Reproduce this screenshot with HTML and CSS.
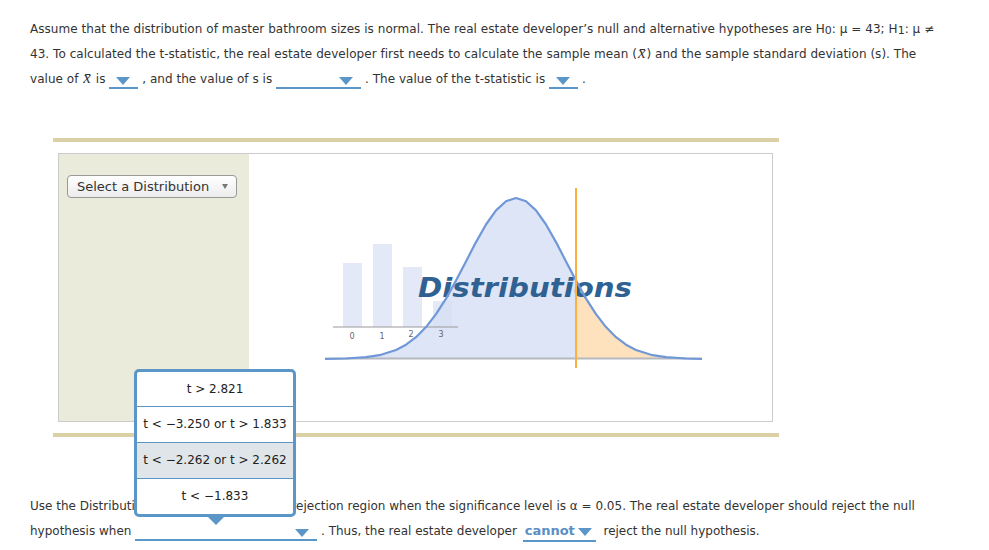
FILE: index.html
```html
<!DOCTYPE html>
<html lang="en">
<head>
    <meta charset="UTF-8">
    <meta name="viewport" content="width=device-width, initial-scale=1.0">
    <title>Hypothesis test - t-statistic</title>
    <link rel="stylesheet" href="styles.css">
</head>
<body>
    <div class="question">
        <p class="text">
            Assume that the distribution of master bathroom sizes is normal. The real estate developer’s null and alternative hypotheses are H<sub>0</sub>: μ = 43; H<sub>1</sub>: μ ≠<br>
            43. To calculated the t-statistic, the real estate developer first needs to calculate the sample mean (<i class="xbar">x̄</i>) and the sample standard deviation (s). The<br>
            value of <i class="xbar">x̄</i> is <span class="dd dd-sm"></span> , and the value of s is <span class="dd dd-md"></span> . The value of the t-statistic is <span class="dd dd-sm"></span> .
        </p>
    </div>

    <div class="tool">
        <div class="rule"></div>
        <div class="frame">
            <div class="side">
                <button class="dist-select">Select a Distribution <span class="caret"></span></button>
            </div>
            <div class="canvas">
                <svg class="splash" width="523" height="267" viewBox="0 0 523 267">
                    <g fill="#e3e9f6">
                        <rect x="94" y="109" width="19" height="64"/>
                        <rect x="124" y="90" width="19" height="83"/>
                        <rect x="154" y="113" width="19" height="60"/>
                        <rect x="184" y="147" width="19" height="26"/>
                    </g>
                    <path fill="#d6dff4" fill-opacity="0.8" d="M76,205 L97,204.5 L117,203.2 L132,200.8 L147,196 L157,190.7 L167,183.2 L177,173.1 L187,160.2 L197,144.6 L207,126.6 L217,107.4 L227,88.1 L237,70.5 L247,56.4 L257,47.2 L267,44 L277,47.2 L287,56.4 L297,70.5 L307,88.1 L317,107.4 L327,126.6 L327,205 Z"/>
                    <path fill="#fde2bd" d="M327,126.6 L337,144.6 L347,160.2 L357,173.1 L367,183.2 L377,190.7 L387,196 L402,200.8 L417,203.2 L437,204.5 L453,205 L327,205 Z"/>
                    <line x1="84" y1="173" x2="209" y2="173" stroke="#999" stroke-width="1"/>
                    <g class="bar-labels" text-anchor="middle">
                        <text x="103" y="185">0</text>
                        <text x="133" y="185">1</text>
                        <text x="162" y="183">2</text>
                        <text x="192" y="183">3</text>
                    </g>
                    <line x1="76" y1="204.5" x2="453" y2="204.5" stroke="#b4b8bf" stroke-width="2"/>
                    <text class="splash-title" x="169" y="143" textLength="214" lengthAdjust="spacingAndGlyphs">Distributions</text>
                    <path fill="none" stroke="#7097d8" stroke-width="2.2" stroke-linejoin="round" d="M76,205 L97,204.5 L117,203.2 L132,200.8 L147,196 L157,190.7 L167,183.2 L177,173.1 L187,160.2 L197,144.6 L207,126.6 L217,107.4 L227,88.1 L237,70.5 L247,56.4 L257,47.2 L267,44 L277,47.2 L287,56.4 L297,70.5 L307,88.1 L317,107.4 L327,126.6 L337,144.6 L347,160.2 L357,173.1 L367,183.2 L377,190.7 L387,196 L402,200.8 L417,203.2 L437,204.5 L453,205"/>
                    <line x1="327" y1="34" x2="327" y2="214" stroke="#fbb040" stroke-width="2"/>
                </svg>
            </div>
        </div>
        <div class="rule"></div>
    </div>

    <div class="answer">
        <p class="text">
            Use the Distributions tool to determine the rejection region when the significance level is α = 0.05. The real estate developer should reject the null<br>
            hypothesis when <span class="dd dd-lg"></span> . Thus, the real estate developer <span class="dd-val">cannot</span> reject the null hypothesis.
        </p>
    </div>

    <div class="popup">
        <ul class="options">
            <li class="option">t &gt; 2.821</li>
            <li class="option">t &lt; −3.250 or t &gt; 1.833</li>
            <li class="option hover">t &lt; −2.262 or t &gt; 2.262</li>
            <li class="option">t &lt; −1.833</li>
        </ul>
    </div>
</body>
</html>
```

FILE: styles.css
```css
body {
    margin: 0;
    font-family: "DejaVu Sans", Verdana, sans-serif;
    font-size: 12px;
    color: #333;
    background: #fff;
    position: relative;
}

.text {
    margin: 0;
    line-height: 25px;
}

.text sub {
    font-size: 11px;
    vertical-align: -1px;
    line-height: 0;
}

.xbar {
    font-family: "Liberation Serif", serif;
    font-size: 17px;
    line-height: 0;
    padding: 0 1px;
}

.question {
    padding: 17px 30px 0;
}

.question .text {
    letter-spacing: 0.04px;
}

/* inline answer dropdowns */
.dd {
    display: inline-block;
    position: relative;
    height: 19px;
    border-bottom: 2px solid #5b96c8;
    vertical-align: -6px;
    box-sizing: border-box;
}

.dd::after,
.dd-val::after {
    content: "";
    position: absolute;
    right: 8px;
    top: 7px;
    border-left: 7px solid transparent;
    border-right: 7px solid transparent;
    border-top: 8px solid #5b96c8;
}

.dd-sm { width: 29px; }
.dd-md { width: 85px; }
.dd-lg { width: 182px; }

.dd-val {
    display: inline-block;
    position: relative;
    width: 73px;
    margin: 0 4px 0 2px;
    padding: 0 0 1px 2px;
    line-height: 16px;
    border-bottom: 2px solid #5b96c8;
    box-sizing: border-box;
    color: #5b8fc4;
    font-weight: bold;
    font-size: 13px;
}

.dd-val::after {
    top: 5px;
    right: 4px;
}

/* distributions tool */
.tool {
    margin: 46px 0 0 53px;
    width: 726px;
}

.rule {
    height: 4px;
    background: #dbcfa5;
}

.frame {
    display: flex;
    margin: 11px 6px 11px 5px;
    height: 269px;
    border: 1px solid #ccc;
    box-sizing: border-box;
}

.side {
    width: 190px;
    background: #ebebdc;
    padding: 21px 0 0 8px;
    box-sizing: border-box;
}

.dist-select {
    display: flex;
    align-items: center;
    width: 170px;
    height: 23px;
    padding: 0 0 0 9px;
    border: 1px solid #999;
    border-radius: 4px;
    background: linear-gradient(#fff, #ececec);
    font-family: "DejaVu Sans", Verdana, sans-serif;
    font-size: 13px;
    color: #333;
}

.caret {
    margin-left: 13px;
    border-left: 3px solid transparent;
    border-right: 3px solid transparent;
    border-top: 5px solid #777;
}

.canvas {
    flex: 1;
    background: #fff;
}

.splash {
    display: block;
}

.bar-labels {
    font-family: "DejaVu Sans", sans-serif;
    font-size: 8px;
    fill: #666;
}

.splash-title {
    font-family: "DejaVu Sans", sans-serif;
    font-weight: bold;
    font-style: italic;
    font-size: 26px;
    fill: #2f6192;
}

.answer {
    padding: 57px 30px 0;
}

/* open dropdown list */
.popup {
    position: absolute;
    left: 134px;
    top: 369px;
    width: 162px;
    border: 3px solid #5b96c8;
    border-radius: 5px;
    background: #fff;
    box-sizing: border-box;
}

.popup::after {
    content: "";
    position: absolute;
    left: 71px;
    bottom: -11px;
    border-left: 8px solid transparent;
    border-right: 8px solid transparent;
    border-top: 8px solid #5b96c8;
}

.options {
    list-style: none;
    margin: 0;
    padding: 0;
}

.option {
    height: 35px;
    line-height: 35px;
    text-align: center;
    color: #222;
    border-top: 1px solid #5b96c8;
    white-space: nowrap;
}

.option:first-child {
    border-top: 0;
    height: 34px;
}

.option.hover {
    background: #dfe5e8;
}
```
